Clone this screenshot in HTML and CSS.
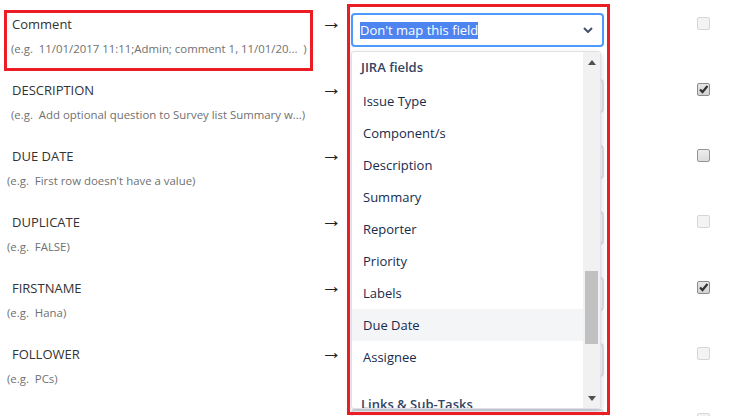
FILE: index.html
```html
<!DOCTYPE html>
<html lang="en">
<head>
    <link rel="stylesheet" href="styles.css">
    <meta charset="UTF-8">
    <meta name="viewport" content="width=device-width, initial-scale=1.0">
    <title>Field mapping</title>
</head>
<body>
    <div class="page">
        <div class="row">
            <div class="field-cell">
                <div class="field marked">
                    <div class="name">Comment</div>
                    <div class="hint long">(e.g.&nbsp; 11/01/2017 11:11;Admin; comment 1, 11/01/20...&nbsp; )</div>
                </div>
            </div>
            <div class="arrow">→</div>
            <div class="select-cell">
                <div class="select active">
                    <span class="picked">Don't map this field</span>
                    <svg class="chevron" width="10" height="6" viewBox="0 0 10 6"><path d="M1 1 L5 5 L9 1" fill="none" stroke="#42526e" stroke-width="2"/></svg>
                </div>
                <div class="menu">
                    <div class="options">
                        <div class="group">JIRA fields</div>
                        <div class="option">Issue Type</div>
                        <div class="option">Component/s</div>
                        <div class="option">Description</div>
                        <div class="option">Summary</div>
                        <div class="option">Reporter</div>
                        <div class="option">Priority</div>
                        <div class="option">Labels</div>
                        <div class="option hover">Due Date</div>
                        <div class="option">Assignee</div>
                        <div class="group next">Links &amp; Sub-Tasks</div>
                    </div>
                    <div class="scrollbar">
                        <svg class="sb-up" width="8" height="5" viewBox="0 0 8 5"><path d="M0 5 L4 0 L8 5 Z" fill="#505050"/></svg>
                        <div class="thumb"></div>
                        <svg class="sb-down" width="8" height="5" viewBox="0 0 8 5"><path d="M0 0 L4 5 L8 0 Z" fill="#505050"/></svg>
                    </div>
                </div>
                <div class="callout"></div>
            </div>
            <div class="check-cell"><span class="check"></span></div>
        </div>

        <div class="row">
            <div class="field-cell">
                <div class="field">
                    <div class="name">DESCRIPTION</div>
                    <div class="hint long">(e.g.&nbsp; Add optional question to Survey list Summary w...)</div>
                </div>
            </div>
            <div class="arrow">→</div>
            <div class="select-cell"><div class="select"></div></div>
            <div class="check-cell"><span class="check on"><svg width="11" height="11" viewBox="0 0 11 11"><path d="M2 5.5 L4.5 8 L9.5 2" fill="none" stroke="#333" stroke-width="2.2"/></svg></span></div>
        </div>

        <div class="row">
            <div class="field-cell">
                <div class="field">
                    <div class="name">DUE DATE</div>
                    <div class="hint">(e.g.&nbsp; First row doesn't have a value)</div>
                </div>
            </div>
            <div class="arrow">→</div>
            <div class="select-cell"><div class="select"></div></div>
            <div class="check-cell"><span class="check off"></span></div>
        </div>

        <div class="row">
            <div class="field-cell">
                <div class="field">
                    <div class="name">DUPLICATE</div>
                    <div class="hint">(e.g.&nbsp; FALSE)</div>
                </div>
            </div>
            <div class="arrow">→</div>
            <div class="select-cell"><div class="select"></div></div>
            <div class="check-cell"><span class="check"></span></div>
        </div>

        <div class="row">
            <div class="field-cell">
                <div class="field">
                    <div class="name">FIRSTNAME</div>
                    <div class="hint">(e.g.&nbsp; Hana)</div>
                </div>
            </div>
            <div class="arrow">→</div>
            <div class="select-cell"><div class="select"></div></div>
            <div class="check-cell"><span class="check on"><svg width="11" height="11" viewBox="0 0 11 11"><path d="M2 5.5 L4.5 8 L9.5 2" fill="none" stroke="#333" stroke-width="2.2"/></svg></span></div>
        </div>

        <div class="row">
            <div class="field-cell">
                <div class="field">
                    <div class="name">FOLLOWER</div>
                    <div class="hint">(e.g.&nbsp; PCs)</div>
                </div>
            </div>
            <div class="arrow">→</div>
            <div class="select-cell"><div class="select"></div></div>
            <div class="check-cell"><span class="check"></span></div>
        </div>

        <div class="row">
            <div class="field-cell">
                <div class="field">
                    <div class="name">Parent COMMENT</div>
                </div>
            </div>
            <div class="arrow"></div>
            <div class="select-cell"><div class="select"></div></div>
            <div class="check-cell"><span class="check"></span></div>
        </div>
    </div>
</body>
</html>
```

FILE: styles.css
```css
*{
    margin: 0;
    padding: 0;
    box-sizing: border-box;
}
body{
    background: #fff;
    font-family: "Open Sans", "Noto Sans", sans-serif;
    color: #333;
    overflow: hidden;
}
.page{
    width: 729px;
    height: 416px;
    overflow: hidden;
}
.row{
    display: grid;
    grid-template-columns: 316px 35px 253px 1fr;
    height: 66px;
    align-items: start;
}
.field-cell{
    padding-top: 13px;
}
.field{
    margin-left: 7px;
    width: 303px;
    height: 56px;
    padding-left: 5px;
}
.marked{
    outline: 3px solid #ec1c24;
    margin-top: 1px;
    height: 55px;
}
.marked .name{
    margin-top: -1px;
}
.name{
    font-size: 13px;
    line-height: 22px;
    color: #333;
}
.hint{
    margin-top: 4px;
    margin-left: -5px;
    font-size: 11.4px;
    line-height: 20px;
    color: #707070;
    white-space: nowrap;
}
.hint.long{
    margin-left: -1px;
}
.arrow{
    padding-top: 10px;
    padding-left: 5px;
    font-size: 21px;
    line-height: 22px;
    color: #222;
}
.select-cell{
    position: relative;
    padding-top: 13px;
}
.select{
    height: 34px;
    border: 2px solid #dfe1e6;
    border-radius: 4px;
    background: #fafbfc;
    display: flex;
    align-items: center;
    justify-content: space-between;
    padding: 0 9px 0 7px;
    font-size: 13px;
    color: #172b4d;
}
.select.active{
    border-color: #4c9aff;
    background: #fff;
}
.picked{
    background: #4d84f0;
    color: #fff;
    line-height: 17px;
}
.menu{
    position: absolute;
    top: 51px;
    left: 0;
    width: 250px;
    height: 358px;
    background: #fff;
    border: 1px solid #dfe1e6;
    border-radius: 3px;
    box-shadow: 0 3px 6px rgba(9, 30, 66, 0.2);
    display: flex;
    z-index: 2;
}
.options{
    flex: 1;
    overflow: hidden;
}
.group{
    height: 33px;
    padding-left: 9px;
    line-height: 30px;
    font-size: 13px;
    font-weight: 600;
    color: #344563;
}
.group.next{
    margin-top: 16px;
}
.option{
    height: 32px;
    line-height: 32px;
    padding-left: 11px;
    font-size: 13px;
    color: #172b4d;
}
.option.hover{
    background: #f4f5f7;
}
.scrollbar{
    position: relative;
    width: 17px;
    background: #f1f1f1;
}
.sb-up{
    position: absolute;
    top: 8px;
    left: 5px;
}
.sb-down{
    position: absolute;
    bottom: 7px;
    left: 5px;
}
.thumb{
    position: absolute;
    top: 219px;
    left: 2px;
    width: 13px;
    height: 73px;
    background: #c1c1c1;
}
.callout{
    position: absolute;
    top: 4px;
    left: -4px;
    width: 263px;
    height: 411px;
    border: 3px solid #ec1c24;
    z-index: 3;
}
.check-cell{
    padding-top: 17px;
    padding-left: 93px;
}
.check{
    display: block;
    width: 13px;
    height: 13px;
    border: 1px solid #d6d6d6;
    border-radius: 2px;
    background: #f3f3f3;
}
.check.off{
    border-color: #959595;
    background: linear-gradient(#ededed, #dcdcdc);
}
.check.on{
    border-color: #8c8c8c;
    background: linear-gradient(#e6e6e6, #d4d4d4);
}
.check svg{
    display: block;
}
```
